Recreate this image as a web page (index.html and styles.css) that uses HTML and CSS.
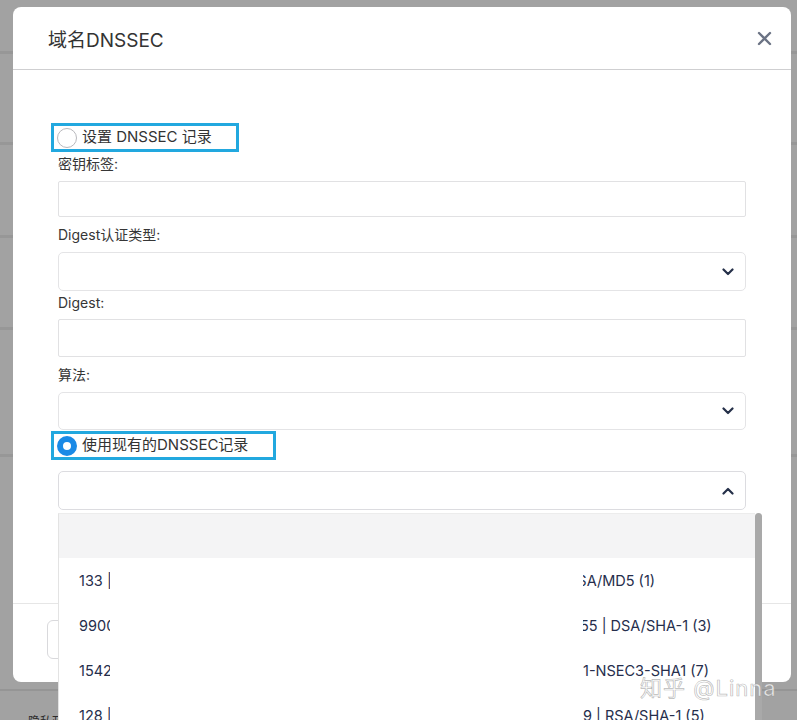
FILE: index.html
```
<!DOCTYPE html>
<html lang="zh-CN">
<head>
<meta charset="utf-8">
<title>域名DNSSEC</title>
<link rel="stylesheet" href="styles.css">
</head>
<body>
<div class="page">
  <div class="modal">
    <div class="modal-header">
      <h2 class="modal-title">域名DNSSEC</h2>
      <button class="close-btn" aria-label="关闭">
        <svg width="15" height="15" viewBox="0 0 15 15"><path d="M2 2L13 13M13 2L2 13" stroke="#6b7384" stroke-width="2.4" stroke-linecap="round" fill="none"/></svg>
      </button>
    </div>
    <div class="modal-body">
      <label class="radio-box radio-box-1"><span class="radio"></span><span class="radio-text">设置 DNSSEC 记录</span></label>
      <div class="field-label fl-1">密钥标签:</div>
      <div class="input in-1"></div>
      <div class="field-label fl-2">Digest认证类型:</div>
      <div class="select se-2">
        <svg class="chev" width="12" height="8" viewBox="0 0 12 8"><path d="M1.5 1.5L6 6L10.5 1.5" stroke="#253049" stroke-width="2.2" fill="none" stroke-linecap="round" stroke-linejoin="round"/></svg>
      </div>
      <div class="field-label fl-3">Digest:</div>
      <div class="input in-3"></div>
      <div class="field-label fl-4">算法:</div>
      <div class="select se-4">
        <svg class="chev" width="12" height="8" viewBox="0 0 12 8"><path d="M1.5 1.5L6 6L10.5 1.5" stroke="#253049" stroke-width="2.2" fill="none" stroke-linecap="round" stroke-linejoin="round"/></svg>
      </div>
      <label class="radio-box radio-box-2"><span class="radio checked"></span><span class="radio-text">使用现有的DNSSEC记录</span></label>
      <div class="select-wrap">
        <div class="select se-5 open">
          <svg class="chev" width="12" height="8" viewBox="0 0 12 8"><path d="M1.5 6.5L6 2L10.5 6.5" stroke="#253049" stroke-width="2.2" fill="none" stroke-linecap="round" stroke-linejoin="round"/></svg>
        </div>
        <div class="dropdown">
          <div class="dd-list">
            <div class="dd-item dd-empty"></div>
            <div class="dd-item"><span class="dd-l">133 | 8</span><span class="dd-r"><span class="dd-r-in shift-a">RSA/MD5 (1)</span></span></div>
            <div class="dd-item"><span class="dd-l">99001 | 2</span><span class="dd-r"><span class="dd-r-in shift-b">55 | DSA/SHA-1 (3)</span></span></div>
            <div class="dd-item"><span class="dd-l">15423 | R</span><span class="dd-r"><span class="dd-r-in">1-NSEC3-SHA1 (7)</span></span></div>
            <div class="dd-item"><span class="dd-l">128 | 2</span><span class="dd-r"><span class="dd-r-in">9 | RSA/SHA-1 (5)</span></span></div>
          </div>
          <div class="dd-scrollbar"></div>
        </div>
      </div>
    </div>
    <div class="modal-footer">
      <button class="btn">取消</button>
    </div>
  </div>
  <div class="page-foot">隐私政策</div>
  <div class="watermark">知乎 @Linna</div>
</div>
</body>
</html>
```

FILE: styles.css
```
html, body {
  margin: 0;
  padding: 0;
  height: 720px;
  overflow: hidden;
}

body {
  font-family: "Inter", "Noto Sans CJK SC", sans-serif;
  background: linear-gradient(to bottom,
    #a2a2a2 0 51px, #979797 51px 54px,
    #a2a2a2 54px 142px, #979797 142px 145px,
    #a2a2a2 145px 235px, #979797 235px 238px,
    #a2a2a2 238px 327px, #979797 327px 330px,
    #a2a2a2 330px 454px, #979797 454px 457px,
    #a2a2a2 457px 689px, #959595 689px 691px,
    #a2a2a2 691px 720px);
  color: #333;
}

.page {
  position: relative;
  height: 720px;
  padding-top: 7px;
  box-sizing: border-box;
}

.modal {
  margin-left: 13px;
  width: 778px;
  height: 675px;
  background: #fff;
  border-radius: 8px;
  display: flex;
  flex-direction: column;
}

.modal-header {
  height: 62px;
  border-bottom: 1px solid #cfcfd1;
  display: flex;
  align-items: center;
  justify-content: space-between;
  padding: 0 19px 0 35px;
  flex: none;
}

.modal-title {
  margin: 0;
  font-size: 19px;
  font-weight: 400;
  color: #333;
}

.close-btn {
  border: 0;
  background: none;
  padding: 0;
  width: 15px;
  height: 15px;
  display: flex;
}

.modal-body {
  flex: 1;
  padding: 53px 45px 0 45px;
  position: relative;
}

.radio-box {
  display: flex;
  align-items: center;
  margin-left: -7px;
  height: 29px;
  box-sizing: border-box;
  border: 3px solid #22a8df;
  padding-left: 3px;
  gap: 5px;
  font-size: 15px;
  color: #333;
}

.radio-box-1 { width: 188px; }
.radio-box-2 { width: 225px; margin-top: 1px; }

.radio {
  width: 20px;
  height: 20px;
  border-radius: 50%;
  box-sizing: border-box;
  border: 1px solid #b9b9bd;
  background: #fff;
  flex: none;
}

.radio.checked {
  border: 6px solid #1a8ae6;
}

.radio-text {
  white-space: nowrap;
  line-height: 20px;
  margin-top: -2px;
}

.field-label {
  font-size: 14px;
  line-height: 20px;
  color: #363636;
}

.fl-1 { margin-top: 2px; }
.fl-2 { margin-top: 8px; }
.fl-3 { margin-top: 2px; }
.fl-4 { margin-top: 8px; }

.input {
  box-sizing: border-box;
  border: 1px solid #e1e1e3;
  border-radius: 2px;
  background: #fff;
}

.in-1 { height: 36px; margin-top: 7px; }
.in-3 { height: 38px; margin-top: 6px; }

.select {
  box-sizing: border-box;
  border: 1px solid #e4e4e6;
  border-radius: 5px;
  background: #fff;
  display: flex;
  align-items: center;
  justify-content: flex-end;
  padding-right: 11px;
}

.se-2 { height: 39px; margin-top: 7px; }
.se-4 { height: 38px; margin-top: 7px; }

.select-wrap {
  position: relative;
  margin-top: 11px;
}

.se-5 {
  height: 39px;
  border-color: #dcdce0;
}

.dropdown {
  position: absolute;
  left: 0;
  top: 42px;
  width: 704px;
  height: 230px;
  display: flex;
  z-index: 10;
}

.dd-list {
  flex: 1;
  background: #fff;
  border-left: 1px solid #e3e3e3;
  border-top: 1px solid #ececec;
}

.dd-scrollbar {
  width: 7px;
  background: #a9a9a9;
  border-radius: 4px 4px 0 0;
}

.dd-item {
  height: 45px;
  display: grid;
  grid-template-columns: 31px 473px 170px;
  align-items: center;
  padding-left: 20px;
  font-size: 14.5px;
  color: #262e4c;
}

.dd-empty {
  height: 44px;
  background: #f4f4f5;
}

.dd-l {
  overflow: hidden;
  white-space: nowrap;
}

.dd-r {
  grid-column: 3;
  overflow: hidden;
  white-space: nowrap;
}

.dd-r-in {
  display: inline-block;
}

.shift-a { margin-left: -15px; }
.shift-b { margin-left: -3px; }

.modal-footer {
  flex: none;
  height: 79px;
  box-sizing: border-box;
  border-top: 1px solid #e6e6e6;
  padding: 16px 0 0 34px;
}

.btn {
  height: 39px;
  width: 110px;
  border: 1px solid #d9d9dc;
  border-radius: 6px;
  background: #fff;
  font-family: inherit;
  font-size: 14px;
  color: #333;
}

.page-foot {
  margin: 33px 0 0 28px;
  font-size: 12px;
  line-height: 14px;
  color: #2b2b2b;
}

.watermark {
  position: absolute;
  left: 640px;
  top: 673px;
  font-size: 22px;
  line-height: 30px;
  letter-spacing: 1px;
  color: rgba(255, 255, 255, 0.8);
  -webkit-text-stroke: 0.7px rgba(140, 140, 140, 0.6);
  z-index: 20;
  white-space: nowrap;
}
```
